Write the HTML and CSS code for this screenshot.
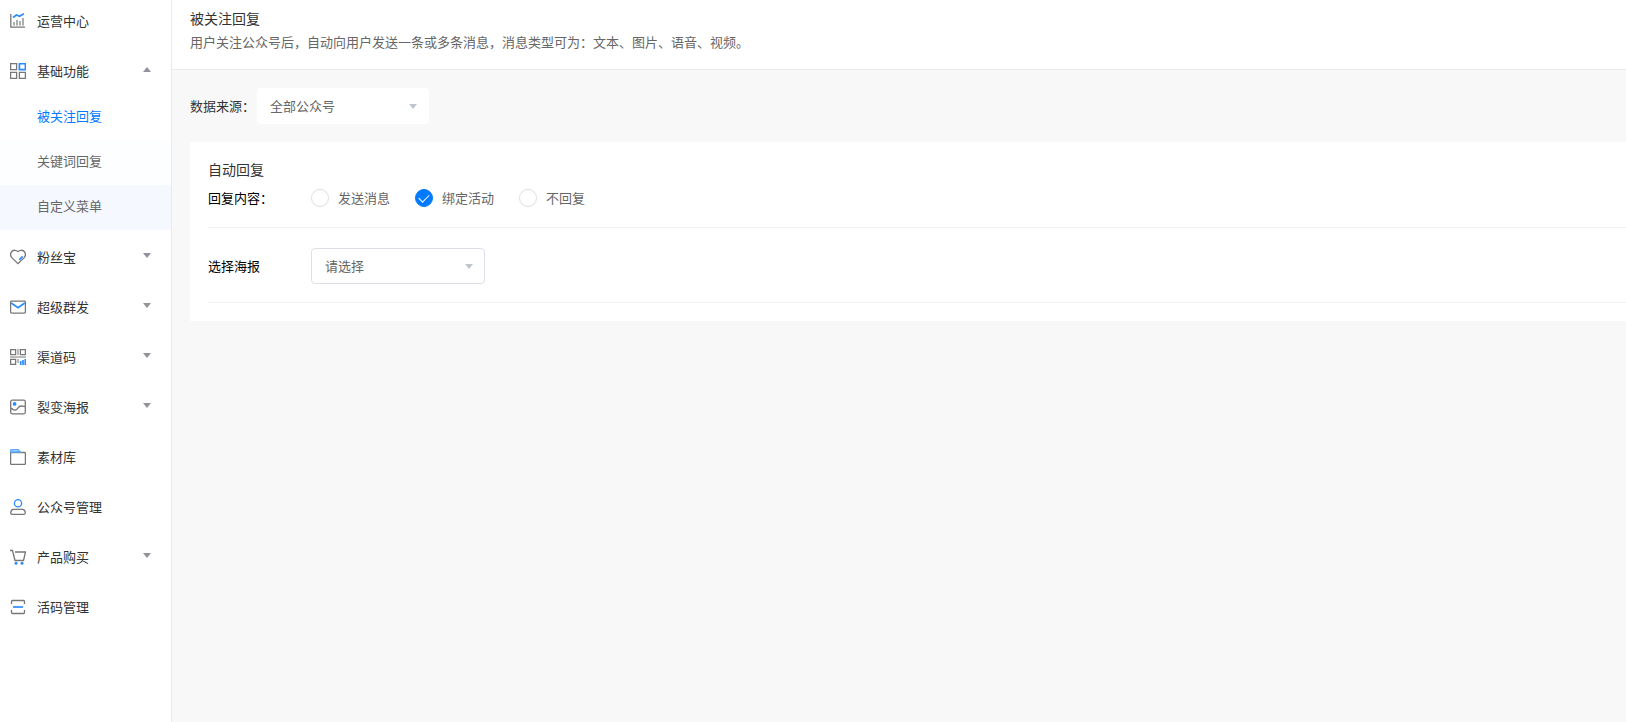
FILE: index.html
```
<!DOCTYPE html>
<html lang="zh-CN">
<head>
  <meta charset="UTF-8">
  <meta name="viewport" content="width=device-width, initial-scale=1.0">
  <title>被关注回复</title>
  <link rel="stylesheet" href="styles.css">
</head>
<body>
  <aside class="sidebar">
    <nav class="menu">
      <a href="#" class="menu-item">
        <svg class="icon" viewBox="0 0 16 16"><path d="M.8 1v13.200H15"/><path class="gray" d="M4 12.500V9M7 12.500V7M10 12.500V8M13 12.500V5" stroke-width="1.600"/><path class="blue" d="M3 4.500 6.500 2 9.500 3.200 14 .8"/></svg>
        <span>运营中心</span>
      </a>
      <a href="#" class="menu-item">
        <svg class="icon" viewBox="0 0 16 16"><path d="M.6.6h6v6h-6zM.6 9.400h6v6h-6zM9.400 9.400h6v6h-6z"/><path class="blue" d="M9.400.6h6v6h-6z"/></svg>
        <span>基础功能</span>
        <i class="caret caret-up"></i>
      </a>
      <div class="submenu">
        <a href="#" class="active">被关注回复</a>
        <a href="#" class="visited">关键词回复</a>
        <a href="#" class="hover">自定义菜单</a>
      </div>
      <a href="#" class="menu-item">
        <svg class="icon" viewBox="0 0 16 16"><path d="M8 2.600C6.400.9 3.400.8 1.800 2.500.2 4.400.4 7 2 8.900L8 14.600l6-5.700c1.600-1.900 1.800-4.500.2-6.400C12.600.8 9.600.9 8 2.600z"/><path class="blue" d="M9.300 10.800 12.600 7.400"/></svg>
        <span>粉丝宝</span>
        <i class="caret"></i>
      </a>
      <a href="#" class="menu-item">
        <svg class="icon" viewBox="0 0 16 16"><rect x=".6" y="2.100" width="14.800" height="12" rx="1"/><path class="blue" d="M1.200 4 8 8.800 14.800 4"/></svg>
        <span>超级群发</span>
        <i class="caret"></i>
      </a>
      <a href="#" class="menu-item">
        <svg class="icon" viewBox="0 0 16 16"><path d="M.6.6h5v5h-5zM10.400.6h5v5h-5zM.6 10.400h5v5h-5z"/><path class="light" d="M8 0v6M0 8h16M8 10v4"/><path class="blue" d="M10.700 12v4M13 11v5M15.300 10v6"/></svg>
        <span>渠道码</span>
        <i class="caret"></i>
      </a>
      <a href="#" class="menu-item">
        <svg class="icon" viewBox="0 0 16 16"><rect x=".7" y="1.200" width="14.600" height="13.600" rx="1.500"/><path d="M1 9.500c2 .5 2.500 2 4.500 1.500C8 10.300 8 7 11 7c1.800 0 3 .3 4 .5"/><circle class="dot" cx="4.600" cy="4.900" r="1.900"/></svg>
        <span>裂变海报</span>
        <i class="caret"></i>
      </a>
      <a href="#" class="menu-item">
        <svg class="icon" viewBox="0 0 16 16"><path d="M.6 3v11.500q0 .9.900.9h13q.9 0 .9-.9V4.400q0-.9-.9-.9H.6"/><path class="folder-tab" d="M.6 3V1.600q0-.9.900-.9H8L10.500 3z"/></svg>
        <span>素材库</span>
      </a>
      <a href="#" class="menu-item">
        <svg class="icon" viewBox="0 0 16 16"><circle class="blue-thin" cx="8" cy="4.200" r="3.600"/><path d="M3.500 10.300h9q2.500 0 2.800 3.500 0 1.500-1.300 1.500H2q-1.300 0-1.300-1.500.3-3.500 2.800-3.500z"/></svg>
        <span>公众号管理</span>
      </a>
      <a href="#" class="menu-item">
        <svg class="icon" viewBox="0 0 16 16"><path d="M0 1.500h2.500L5 11.500h8.500l2-8.500H5"/><circle class="dot" cx="6" cy="14.300" r="1.500"/><circle class="dot" cx="12" cy="14.300" r="1.500"/></svg>
        <span>产品购买</span>
        <i class="caret"></i>
      </a>
      <a href="#" class="menu-item">
        <svg class="icon" viewBox="0 0 16 16"><path d="M1.500 5V2.500q0-1 1-1h11q1 0 1 1V5M1.500 11v2.500q0 1 1 1h11q1 0 1-1V11"/><path class="blue" d="M3 8h10"/></svg>
        <span>活码管理</span>
      </a>
    </nav>
  </aside>

  <main class="main">
    <header class="page-header">
      <h1>被关注回复</h1>
      <p>用户关注公众号后，自动向用户发送一条或多条消息，消息类型可为：文本、图片、语音、视频。</p>
    </header>

    <div class="content">
      <div class="source">
        <label for="source">数据来源：</label>
        <div class="select">
          <select id="source">
            <option>全部公众号</option>
          </select>
        </div>
      </div>

      <section class="card">
        <h2>自动回复</h2>
        <div class="row row-reply">
          <span class="row-label" id="reply-label">回复内容：</span>
          <div class="radios" role="radiogroup" aria-labelledby="reply-label">
            <label><input type="radio" name="reply">发送消息</label>
            <label><input type="radio" name="reply" checked>绑定活动</label>
            <label><input type="radio" name="reply">不回复</label>
          </div>
        </div>
        <div class="row row-poster">
          <label class="row-label" for="poster">选择海报</label>
          <div class="select select-border">
            <select id="poster">
              <option>请选择</option>
            </select>
          </div>
        </div>
      </section>
    </div>
  </main>
</body>
</html>
```
FILE: styles.css
```
* {
  box-sizing: border-box;
}
body {
  display: flex;
  min-height: 100vh;
  margin: 0;
  background-color: #f8f8f8;
  color: #333;
  font-family: "Noto Sans CJK SC", sans-serif;
  font-size: 13px;
  line-height: 20px;
}
a {
  color: inherit;
  text-decoration: none;
}

/* sidebar */
.sidebar {
  flex: none;
  width: 172px;
  background-color: #fff;
  border-right: 1px solid #ebebeb;
}
.menu {
  margin-top: -4px;
}
.menu-item {
  display: flex;
  align-items: center;
  height: 50px;
  padding: 0 20px 0 10px;
}
.icon {
  width: 16px;
  height: 16px;
  margin-right: 11px;
  fill: none;
  stroke: #777;
  stroke-width: 1.3;
}
.icon .blue {
  stroke: #2b8cff;
  stroke-width: 1.7;
}
.icon .blue-thin {
  stroke: #2b8cff;
}
.icon .gray {
  stroke: #999;
}
.icon .light {
  stroke: #bbb;
  stroke-width: 2;
}
.icon .dot {
  fill: #2b8cff;
  stroke: none;
}
.icon .folder-tab {
  fill: #b5d6ff;
  stroke: #5ba6ff;
}
.caret {
  margin: 0 0 4px auto;
  border: 4px solid transparent;
  border-top: 5px solid #909399;
  border-bottom: 0;
}
.caret-up {
  border-top: 0;
  border-bottom: 5px solid #909399;
}
.submenu {
  margin: -1px 0 2px;
}
.submenu a {
  display: block;
  padding: 0 0 3px 37px;
  color: #666;
  line-height: 42px;
}
.submenu .active {
  color: #007aff;
}
.submenu .visited {
  background-color: #fcfeff;
}
.submenu .hover {
  background-color: #f5f9ff;
}

/* main */
.main {
  flex: 1;
  min-width: 0;
}
.page-header {
  padding: 7px 18px 17px;
  background-color: #fff;
  border-bottom: 1px solid #ebebeb;
}
h1,
h2 {
  margin: 0;
  font-size: 14px;
  font-weight: 400;
}
h1 {
  line-height: 22px;
}
.page-header p {
  margin: 3px 0 0;
  color: #666;
}
.content {
  padding: 18px 0 18px 18px;
}
.source {
  display: flex;
  align-items: center;
  margin-bottom: 18px;
}
.source label {
  width: 67px;
}

.select {
  position: relative;
  width: 172px;
}
.select::after {
  content: "";
  position: absolute;
  top: 16px;
  right: 12px;
  border: 4px solid transparent;
  border-top: 5px solid #c0c4cc;
  border-bottom: 0;
  pointer-events: none;
}
select {
  appearance: none;
  display: block;
  width: 100%;
  height: 36px;
  padding: 0 28px 0 13px;
  background-color: #fff;
  border: 0;
  border-radius: 4px;
  color: #666;
  font: inherit;
}
.select-border {
  width: 174px;
}
.select-border select {
  border: 1px solid #dcdfe6;
}

.card {
  padding: 17px 0 18px 18px;
  background-color: #fff;
}
h2 {
  line-height: 20px;
}
.row {
  display: flex;
  align-items: center;
  border-bottom: 1px solid #f2f2f2;
}
.row-reply {
  padding: 9px 0 19px;
}
.row-poster {
  padding: 20px 0 18px;
}
.row-label {
  width: 103px;
  color: #000;
}
.radios {
  display: flex;
  gap: 25px;
  color: #666;
}
.radios label {
  display: flex;
  align-items: center;
}
input[type="radio"] {
  appearance: none;
  display: flex;
  justify-content: center;
  width: 18px;
  height: 18px;
  margin: 0 9px 0 0;
  background-color: #fff;
  border: 1px solid #dcdfe6;
  border-radius: 50%;
}
input[type="radio"]:checked {
  background-color: #007aff;
  border-color: #007aff;
}
input[type="radio"]:checked::after {
  content: "";
  width: 5px;
  height: 9px;
  margin-top: 2px;
  border: solid #fff;
  border-width: 0 1px 1px 0;
  transform: rotate(45deg);
}
```
